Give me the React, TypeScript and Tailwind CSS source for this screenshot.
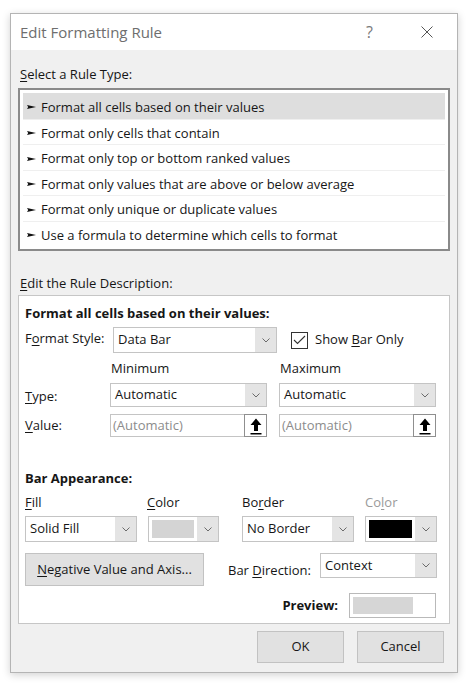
import React from "react";

const rules = [
  "Format all cells based on their values",
  "Format only cells that contain",
  "Format only top or bottom ranked values",
  "Format only values that are above or below average",
  "Format only unique or duplicate values",
  "Use a formula to determine which cells to format",
];

function Chevron() {
  return (
    <svg width="8" height="5" viewBox="0 0 8 5">
      <path d="M0.5 0.5 L4 4 L7.5 0.5" fill="none" stroke="#6b6b6b" strokeWidth="1" />
    </svg>
  );
}

function Pointer() {
  return (
    <svg width="9" height="6" viewBox="0 0 9 6" className="shrink-0">
      <polygon points="0,1 9,3 0,5 1.2,3" fill="#111" />
    </svg>
  );
}

function Select({ w, h, text, muted }: { w: string; h: string; text?: string; muted?: boolean }) {
  return (
    <div className={`flex ${w} ${h} border border-[#c4c4c4] bg-white`}>
      <div className={`flex-1 flex items-center pl-[4px] ${muted ? "text-[#8c8c8c]" : ""}`}>{text}</div>
      <div className="w-[21px] bg-[#e4e4e4] flex items-center justify-center">
        <Chevron />
      </div>
    </div>
  );
}

function Swatch({ w, color }: { w: string; color: string }) {
  return (
    <div className={`flex ${w} h-[26px] border border-[#c4c4c4] bg-white`}>
      <div className="flex-1 p-[3px]">
        <div className={`w-full h-full ${color}`} />
      </div>
      <div className="w-[21px] bg-[#e4e4e4] flex items-center justify-center">
        <Chevron />
      </div>
    </div>
  );
}

function ValueBox() {
  return (
    <div className="flex w-[157px] h-[23px] border border-[#c4c4c4] bg-white">
      <div className="flex-1 flex items-center pl-[2px] text-[#8c8c8c]">(Automatic)</div>
      <div className="w-[23px] border border-[#8f8f8f] -my-px -mr-px flex items-center justify-center">
        <svg width="12" height="18" viewBox="0 0 12 18">
          <path d="M6 1.5 L11.5 8 L8 8 L8 14 L4 14 L4 8 L0.5 8 Z" fill="#000" />
          <rect x="0.5" y="16" width="11" height="1.5" fill="#000" />
        </svg>
      </div>
    </div>
  );
}

export default function App() {
  return (
    <div className="min-h-screen bg-white font-['Open_Sans','Noto_Sans',sans-serif] text-[13px] text-[#161616] pt-[13px] pl-[10px]">
      <div className="w-[448px] h-[660px] border border-[#b4b4b4] shadow-[0_2px_8px_rgba(0,0,0,0.18)] flex flex-col bg-[#f0f0f0]">
        {/* title bar */}
        <div className="h-[36px] bg-white flex items-center pl-[9px] pr-[24px] shrink-0">
          <div className="flex-1 text-[15px] text-[#6e6e6e]">Edit Formatting Rule</div>
          <div className="text-[16px] text-[#7a7a7a] mr-[48px]">?</div>
          <svg width="12" height="12" viewBox="0 0 12 12">
            <path d="M0.5 0.5 L11.5 11.5 M11.5 0.5 L0.5 11.5" stroke="#555" strokeWidth="1" />
          </svg>
        </div>

        <div className="flex-1 flex flex-col px-[7px]">
          <div className="pt-[15px] pl-[2px] h-[38px]">
            <u className="underline-offset-2">S</u>elect a Rule Type:
          </div>
          <div className="h-[163px] border-2 border-[#8a8a8a] bg-white p-[3px] flex flex-col">
            {rules.map((r, i) => (
              <div
                key={r}
                className={`h-[25.6px] flex items-center gap-[5px] pl-[4px] pt-[3px] ${
                  i === 0 ? "bg-[#dedede]" : "border-t border-[#efefef]"
                }`}
              >
                <Pointer />
                <span>{r}</span>
              </div>
            ))}
          </div>

          <div className="mt-[23px] h-[21px] pl-[2px]">
            <u className="underline-offset-2">E</u>dit the Rule Description:
          </div>

          <div className="h-[329px] border border-[#c6c6c6] bg-white flex flex-col pl-[6px]">
            <div className="mt-[8px] h-[18px] leading-[18px] font-bold">Format all cells based on their values:</div>

            <div className="mt-[5px] flex items-center h-[26px]">
              <div className="w-[88px] leading-[18px] -mt-[4px]">
                F<u className="underline-offset-2">o</u>rmat Style:
              </div>
              <Select w="w-[164px]" h="h-[26px]" text="Data Bar" />
              <div className="ml-[14px] w-[17px] h-[17px] border border-[#333] flex items-center justify-center">
                <svg width="13" height="10" viewBox="0 0 13 10">
                  <path d="M1 5 L4.5 8.5 L12 1" fill="none" stroke="#333" strokeWidth="1.1" />
                </svg>
              </div>
              <div className="ml-[7px]">
                Show <u className="underline-offset-2">B</u>ar Only
              </div>
            </div>

            <div className="mt-[6px] h-[18px] leading-[18px] flex">
              <div className="w-[86px]" />
              <div className="w-[169px]">Minimum</div>
              <div>Maximum</div>
            </div>

            <div className="mt-[6px] flex items-center h-[24px]">
              <div className="w-[85px] pt-[3px]">
                <u className="underline-offset-2">T</u>ype:
              </div>
              <Select w="w-[157px]" h="h-[24px]" text="Automatic" />
              <div className="w-[12px]" />
              <Select w="w-[157px]" h="h-[24px]" text="Automatic" />
            </div>

            <div className="mt-[7px] flex items-center h-[23px]">
              <div className="w-[85px]">
                <u className="underline-offset-2">V</u>alue:
              </div>
              <ValueBox />
              <div className="w-[12px]" />
              <ValueBox />
            </div>

            <div className="mt-[32px] h-[18px] leading-[18px] font-bold">Bar Appearance:</div>

            <div className="mt-[6px] h-[18px] leading-[18px] flex">
              <div className="w-[122px]">
                <u className="underline-offset-2">F</u>ill
              </div>
              <div className="w-[95px]">
                <u className="underline-offset-2">C</u>olor
              </div>
              <div className="w-[123px]">
                Bo<u className="underline-offset-2">r</u>der
              </div>
              <div className="text-[#9a9a9a]">
                Co<u className="underline-offset-2">l</u>or
              </div>
            </div>

            <div className="mt-[5px] flex items-center h-[26px]">
              <Select w="w-[112px]" h="h-[26px]" text="Solid Fill" />
              <div className="w-[11px]" />
              <Swatch w="w-[71px]" color="bg-[#d4d4d4]" />
              <div className="w-[23px]" />
              <Select w="w-[112px]" h="h-[26px]" text="No Border" />
              <div className="w-[11px]" />
              <Swatch w="w-[72px]" color="bg-black" />
            </div>

            <div className="mt-[11px] flex items-start h-[33px]">
              <button className="w-[179px] h-[33px] bg-[#e1e1e1] border border-[#c2c2c2] flex items-center justify-center">
                <span>
                  <u className="underline-offset-2">N</u>egative Value and Axis...
                </span>
              </button>
              <div className="ml-[24px] w-[92px] pt-[8px]">
                Bar <u className="underline-offset-2">D</u>irection:
              </div>
              <Select w="w-[117px]" h="h-[25px]" text="Context" />
            </div>

            <div className="mt-[7px] flex items-center h-[25px]">
              <div className="w-[313px] text-right font-bold">Preview:</div>
              <div className="ml-[11px] w-[87px] h-[25px] border border-[#b9b9b9] bg-white p-[3px] pr-[22px]">
                <div className="w-full h-full bg-[#d6d6d6]" />
              </div>
            </div>
          </div>

          <div className="mt-[7px] flex justify-end gap-[13px] pr-[6px]">
            <button className="w-[87px] h-[32px] bg-[#e1e1e1] border border-[#c2c2c2]">OK</button>
            <button className="w-[87px] h-[32px] bg-[#e1e1e1] border border-[#c2c2c2]">Cancel</button>
          </div>
        </div>
      </div>
    </div>
  );
}
